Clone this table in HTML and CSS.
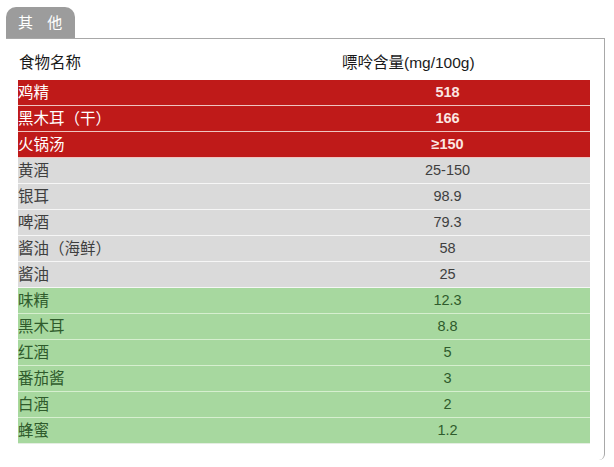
FILE: index.html
```html
<!DOCTYPE html>
<html>
<head>
<meta charset="utf-8">
<link rel="stylesheet" href="styles.css">
</head>
<body>
<div class="wrap">
  <div class="tab">其 他</div>
  <div class="panel">
    <div class="head">
      <div class="c1">食物名称</div>
      <div class="c2">嘌呤含量(mg/100g)</div>
    </div>
    <div class="rows">
      <div class="row red"><div class="c1">鸡精</div><div class="c2">518</div></div>
      <div class="row red"><div class="c1">黑木耳（干）</div><div class="c2">166</div></div>
      <div class="row red"><div class="c1">火锅汤</div><div class="c2">≥150</div></div>
      <div class="row gray"><div class="c1">黄酒</div><div class="c2">25-150</div></div>
      <div class="row gray"><div class="c1">银耳</div><div class="c2">98.9</div></div>
      <div class="row gray"><div class="c1">啤酒</div><div class="c2">79.3</div></div>
      <div class="row gray"><div class="c1">酱油（海鲜）</div><div class="c2">58</div></div>
      <div class="row gray"><div class="c1">酱油</div><div class="c2">25</div></div>
      <div class="row green"><div class="c1">味精</div><div class="c2">12.3</div></div>
      <div class="row green"><div class="c1">黑木耳</div><div class="c2">8.8</div></div>
      <div class="row green"><div class="c1">红酒</div><div class="c2">5</div></div>
      <div class="row green"><div class="c1">番茄酱</div><div class="c2">3</div></div>
      <div class="row green"><div class="c1">白酒</div><div class="c2">2</div></div>
      <div class="row green"><div class="c1">蜂蜜</div><div class="c2">1.2</div></div>
    </div>
  </div>
</div>
</body>
</html>
```
FILE: styles.css
```css
html, body {
  margin: 0;
  padding: 0;
  background: #ffffff;
}
body {
  font-family: "Liberation Sans", "Noto Sans CJK SC", sans-serif;
  width: 614px;
  height: 467px;
  overflow: hidden;
}
.wrap {
  padding: 7px 0 0 6px;
}
.tab {
  width: 69px;
  height: 31px;
  box-sizing: border-box;
  background: #9c9c9c;
  border-radius: 10px 10px 0 0;
  color: #ffffff;
  font-size: 15px;
  line-height: 31px;
  padding-left: 12px;
  letter-spacing: 5px;
  word-spacing: 0px;
}
.panel {
  width: 599px;
  height: 422px;
  box-sizing: border-box;
  border-top: 1px solid #a8a8a8;
  border-right: 1px solid #a8a8a8;
  border-bottom-right-radius: 6px;
  padding: 11px 0 0 12px;
}
.head {
  display: flex;
  height: 30px;
  line-height: 26px;
  font-size: 15.5px;
  color: #1a1a1a;
}
.head .c1 {
  width: 323px;
  padding-left: 1px;
}
.head .c2 {
  flex: 1;
}
.rows {
  width: 572px;
  display: flex;
  flex-direction: column;
}
.row {
  display: flex;
  height: 25px;
  line-height: 25px;
  border-bottom: 1px solid #f4f4f4;
}
.row .c1 {
  width: 287px;
  font-size: 15.5px;
}
.row .c2 {
  flex: 1;
  text-align: center;
  font-size: 14.5px;
}
.red {
  background: #bf1a19;
  color: #ffffff;
  border-bottom-color: #efc4c0;
}
.red .c2 {
  font-weight: bold;
  color: #fbe6e2;
}
.gray {
  background: #dadada;
  color: #3f3f3f;
  border-bottom-color: #f6f6f6;
}
.green {
  background: #a7d89f;
  color: #2f5b2c;
  border-bottom-color: #d6efcf;
}
.row:last-child {
  border-bottom-color: #e4eee2;
}
```
